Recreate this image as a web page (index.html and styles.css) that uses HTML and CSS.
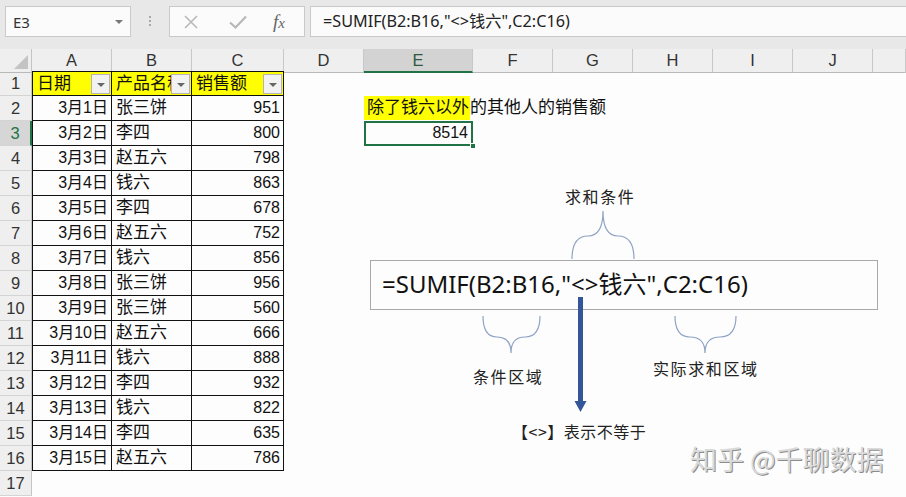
FILE: index.html
```html
<!DOCTYPE html>
<html lang="zh">
<head>
<meta charset="utf-8">
<title>SUMIF</title>
<link rel="stylesheet" href="styles.css">
</head>
<body>
<div class="app">
  <div class="toolbar">
    <div class="namebox"><span class="nb-text">E3</span><span class="nb-arrow"></span></div>
    <div class="grip"><i></i><i></i><i></i></div>
    <div class="fxbox">
      <svg class="ico" width="16" height="16" viewBox="0 0 16 16"><path d="M2 2 L14 14 M14 2 L2 14" stroke="#b8b8b8" stroke-width="1.6" fill="none"/></svg>
      <svg class="ico" width="20" height="16" viewBox="0 0 20 16"><path d="M2 8.5 L7.5 13.5 L18 2.5" stroke="#b8b8b8" stroke-width="2.2" fill="none"/></svg>
      <span class="fx">f<span class="fx-x">x</span></span>
    </div>
    <div class="formula">=SUMIF(B2:B16,"&lt;&gt;钱六",C2:C16)</div>
  </div>

  <div class="sheet">
    <div class="row colhdr">
      <div class="corner"><span class="tri"></span></div>
      <div class="ch">A</div><div class="ch">B</div><div class="ch">C</div><div class="ch">D</div>
      <div class="ch ch-sel">E</div><div class="ch">F</div><div class="ch">G</div><div class="ch">H</div>
      <div class="ch">I</div><div class="ch">J</div><div class="ch"></div>
    </div>

    <div class="row">
      <div class="rh">1</div>
      <div class="c t ca hd"><span class="hd-text">日期</span><span class="dd"></span></div>
      <div class="c t hd"><span class="hd-text">产品名称</span><span class="dd"></span></div>
      <div class="c t hd"><span class="hd-text">销售额</span><span class="dd"></span></div>
    </div>
    <div class="row">
      <div class="rh">2</div>
      <div class="c t ca r">3月1日</div><div class="c t cjk">张三饼</div><div class="c t r">951</div>
      <div class="c"></div>
      <div class="c note"><span class="hl">除了钱六以外</span>的其他人的销售额</div>
    </div>
    <div class="row">
      <div class="rh rh-sel">3</div>
      <div class="c t ca r">3月2日</div><div class="c t cjk">李四</div><div class="c t r">800</div>
      <div class="c"></div>
      <div class="c r selcell">8514<span class="handle"></span></div>
    </div>
    <div class="row"><div class="rh">4</div><div class="c t ca r">3月3日</div><div class="c t cjk">赵五六</div><div class="c t r">798</div></div>
    <div class="row"><div class="rh">5</div><div class="c t ca r">3月4日</div><div class="c t cjk">钱六</div><div class="c t r">863</div></div>
    <div class="row"><div class="rh">6</div><div class="c t ca r">3月5日</div><div class="c t cjk">李四</div><div class="c t r">678</div></div>
    <div class="row"><div class="rh">7</div><div class="c t ca r">3月6日</div><div class="c t cjk">赵五六</div><div class="c t r">752</div></div>
    <div class="row"><div class="rh">8</div><div class="c t ca r">3月7日</div><div class="c t cjk">钱六</div><div class="c t r">856</div></div>
    <div class="row"><div class="rh">9</div><div class="c t ca r">3月8日</div><div class="c t cjk">张三饼</div><div class="c t r">956</div></div>
    <div class="row"><div class="rh">10</div><div class="c t ca r">3月9日</div><div class="c t cjk">张三饼</div><div class="c t r">560</div></div>
    <div class="row"><div class="rh">11</div><div class="c t ca r">3月10日</div><div class="c t cjk">赵五六</div><div class="c t r">666</div></div>
    <div class="row"><div class="rh">12</div><div class="c t ca r">3月11日</div><div class="c t cjk">钱六</div><div class="c t r">888</div></div>
    <div class="row"><div class="rh">13</div><div class="c t ca r">3月12日</div><div class="c t cjk">李四</div><div class="c t r">932</div></div>
    <div class="row"><div class="rh">14</div><div class="c t ca r">3月13日</div><div class="c t cjk">钱六</div><div class="c t r">822</div></div>
    <div class="row"><div class="rh">15</div><div class="c t ca r">3月14日</div><div class="c t cjk">李四</div><div class="c t r">635</div></div>
    <div class="row"><div class="rh">16</div><div class="c t ca r">3月15日</div><div class="c t cjk">赵五六</div><div class="c t r">786</div></div>
    <div class="row"><div class="rh">17</div></div>
  </div>

  <div class="canvas">
    <div class="fbox">=SUMIF(B2:B16,"&lt;&gt;钱六",C2:C16)</div>
    <svg class="shapes" width="906" height="497" viewBox="0 0 906 497">
      <g stroke="#8ea3c4" stroke-width="1.2" fill="none">
        <path d="M572 259 Q572 236 588 236 Q603 236 603 211 Q603 236 618 236 Q634 236 634 259"/>
        <path d="M483 316 Q483 337 497 337 Q511 337 511 353 Q511 337 525 337 Q540 337 540 316"/>
        <path d="M675 316 Q675 337 690 337 Q705 337 705 353 Q705 337 720 337 Q736 337 736 316"/>
      </g>
      <rect x="578" y="297" width="5" height="105" fill="#33569a"/>
      <path d="M574.5 401 L586.5 401 L580.5 412 Z" fill="#33569a"/>
    </svg>
    <div class="lbl l-top">求和条件</div>
    <div class="lbl l-left">条件区域</div>
    <div class="lbl l-right">实际求和区域</div>
    <div class="lbl l-neq">【&lt;&gt;】表示不等于</div>
    <div class="wm">知乎 @千聊数据</div>
  </div>
</div>
</body>
</html>
```

FILE: styles.css
```css
* { box-sizing: border-box; }
body { margin: 0; background: #fff; }

.app {
  position: relative;
  width: 906px;
  height: 497px;
  overflow: hidden;
  background: #fdfdfd;
  font-family: "Liberation Sans", "Noto Sans CJK SC", sans-serif;
  color: #111;
}

/* ---------- toolbar ---------- */
.toolbar {
  height: 49px;
  background: #e8e8e8;
  display: flex;
  align-items: flex-start;
  padding-top: 6px;
}
.namebox {
  margin-left: 5px;
  width: 126px;
  height: 31px;
  background: #fbfbfb;
  border: 1px solid #c9c9c9;
  display: flex;
  align-items: center;
  justify-content: space-between;
  padding: 0 7px 0 7px;
  font-family: "Noto Sans", "Noto Sans CJK SC", sans-serif;
  font-size: 15px;
  color: #333;
}
.nb-arrow {
  width: 0; height: 0;
  border-left: 4px solid transparent;
  border-right: 4px solid transparent;
  border-top: 4px solid #777;
}
.grip {
  width: 38px;
  display: flex;
  flex-direction: column;
  align-items: center;
  gap: 2px;
  padding-top: 10px;
}
.grip i { display: block; width: 2px; height: 2px; background: #a8a8a8; }
.fxbox {
  width: 136px;
  height: 31px;
  background: #fbfbfb;
  border: 1px solid #c9c9c9;
  display: flex;
  align-items: center;
  padding-left: 13px;
}
.ico { display: block; }
.ico:first-child { margin-right: 29px; }
.ico + .ico { margin-right: 25px; }
.fx {
  font-family: "Liberation Serif", serif;
  font-style: italic;
  font-size: 19px;
  color: #666;
}
.fx-x { font-size: 15px; }
.formula {
  margin-left: 5px;
  flex: 1;
  height: 31px;
  background: #fbfbfb;
  border: 1px solid #c9c9c9;
  border-right: none;
  padding-left: 12px;
  font-family: "Noto Sans", "Noto Sans CJK SC", sans-serif;
  font-size: 16.2px;
  line-height: 29px;
  color: #222;
  white-space: nowrap;
}

/* ---------- sheet ---------- */
.sheet { display: flex; flex-direction: column; }
.row {
  display: grid;
  grid-template-columns: 32px 80px 80px 92px 80px 109px 80px 80px 80px 80px 80px 1fr;
  height: 25px;
}
.colhdr { height: 22px; background: #efefef; }
.corner {
  position: relative;
  background: #efefef;
  border-right: 1px solid #c4c4c4;
  border-bottom: 1px solid #b9b9b9;
}
.tri {
  position: absolute;
  right: 3px;
  bottom: 3px;
  width: 0; height: 0;
  border-left: 14px solid transparent;
  border-bottom: 14px solid #c4c4c4;
}
.ch {
  background: #efefef;
  border-right: 1px solid #c8c8c8;
  border-bottom: 1px solid #b9b9b9;
  text-align: center;
  font-size: 16.5px;
  line-height: 22px;
  color: #333;
}
.ch-sel {
  background: #d3d3d3;
  border-bottom: 2px solid #217346;
  color: #2c5a3f;
}
.rh {
  background: #efefef;
  border-right: 1px solid #c4c4c4;
  border-bottom: 1px solid #d4d4d4;
  text-align: center;
  font-size: 16.5px;
  line-height: 24px;
  color: #333;
}
.rh-sel {
  background: #d6d6d6;
  color: #217346;
  border-right: 2px solid #217346;
}
.c {
  font-size: 16px;
  line-height: 24px;
  padding: 0 3px 0 4px;
  white-space: nowrap;
  overflow: hidden;
}
.cjk { font-size: 17px; }
.r { text-align: right; }
.t { border-right: 1px solid #111; border-bottom: 1px solid #111; }
.ca { border-left: 1px solid #111; }
.hd {
  background: #ffff00;
  border-top: 1px solid #111;
  display: flex;
  align-items: center;
  padding-right: 1px;
  font-size: 17px;
}
.hd-text { flex: 1; overflow: hidden; white-space: nowrap; line-height: 22px; }
.dd {
  flex: none;
  width: 19px;
  height: 20px;
  background: #f2f2f2;
  border: 1px solid #b4b4b4;
  position: relative;
}
.dd::after {
  content: "";
  position: absolute;
  left: 5px; top: 8px;
  border-left: 4px solid transparent;
  border-right: 4px solid transparent;
  border-top: 4px solid #666;
}
.note {
  grid-column: 6 / span 3;
  overflow: visible;
  font-size: 17px;
  padding-left: 3px;
}
.hl {
  display: inline-block;
  width: 106px;
  background: #ffff00;
  height: 24px;
  margin-left: -3px;
  padding-left: 3px;
}
.selcell {
  grid-column: 6;
  position: relative;
  overflow: visible;
  box-shadow: inset 0 0 0 2px #217346;
  padding-right: 5px;
}
.handle {
  position: absolute;
  right: -3px;
  bottom: -3px;
  width: 6px;
  height: 6px;
  background: #217346;
  border: 1px solid #fff;
}

/* ---------- diagram overlay ---------- */
.canvas {
  position: absolute;
  left: 0; top: 0;
  width: 906px; height: 497px;
  pointer-events: none;
}
.fbox {
  position: absolute;
  left: 370px; top: 260px;
  width: 508px; height: 50px;
  background: #fdfdfd;
  border: 1px solid #a9a9a9;
  padding-left: 11px;
  font-family: "Noto Sans", "Noto Sans CJK SC", sans-serif;
  font-size: 24px;
  line-height: 46px;
  color: #111;
  white-space: nowrap;
}
.shapes { position: absolute; left: 0; top: 0; }
.lbl {
  position: absolute;
  font-family: "Noto Sans CJK SC", sans-serif;
  font-size: 16px;
  letter-spacing: 1.6px;
  line-height: 20px;
  color: #222;
  white-space: nowrap;
}
.l-top { left: 565px; top: 186px; }
.l-left { left: 473px; top: 366px; }
.l-right { left: 653px; top: 358px; }
.l-neq { left: 512px; top: 421px; letter-spacing: 0.5px; }
.wm {
  position: absolute;
  left: 690px; top: 443px;
  font-family: "Noto Sans CJK SC", sans-serif;
  font-size: 27px;
  line-height: 32px;
  color: #dadada;
  text-shadow: 1px 1px 0 #8c8c8c;
  white-space: nowrap;
}
```
